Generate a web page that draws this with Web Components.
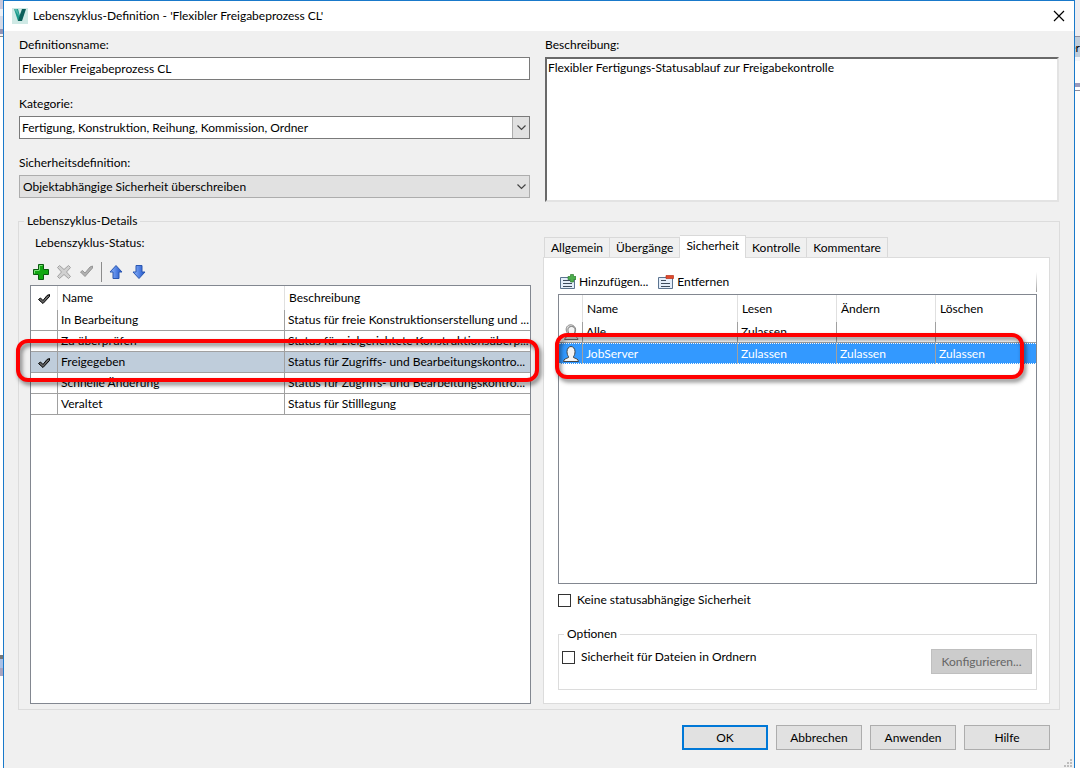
<!DOCTYPE html>
<html lang="de">
<head>
<meta charset="utf-8">
<title>Lebenszyklus-Definition</title>
<style>
    html, body{
        height: 100%;
        margin: 0;
    }

    body{
        background: #fff;
        color: #000;
        font-family: Lato, "Open Sans", sans-serif;
        font-size: 12px;
        line-height: 16px;
        overflow: hidden;
    }
</style>
</head>
<body>

<life-cycle-dialog></life-cycle-dialog>

<script>
const ICONS = {
    vault: `<svg width="16" height="16" viewBox="0 0 16 16"><path fill="#cfe9e5" d="M0 0h16v16H0z"/><path fill="#1b9a8c" d="M2 1h4l2 7 1 5H6z"/><path fill="#0a5f5a" d="M6 13l1.500-5L10 1h4l-4 12z"/><path fill="#4fb5a8" d="M2 1h3l2.500 8z"/></svg>`,
    close: `<svg width="12" height="12" viewBox="0 0 12 12"><path d="M1 1l10 10M11 1L1 11" stroke="#000" stroke-width="1.2"/></svg>`,
    plus: `<svg width="18" height="18" viewBox="0 0 18 18"><path fill="#12a812" stroke="#0a5c10" d="M6.500 1.500h5v5h5v5h-5v5h-5v-5h-5v-5h5z"/><path fill="none" stroke="#7de07a" d="M7.500 7V2.500h3M2.500 10.500v-3h5"/></svg>`,
    cross: `<svg width="18" height="18" viewBox="0 0 18 18"><path fill="#d0d0d0" stroke="#a2a2a2" d="M2.500 4.500l2-2 4.500 4 4.500-4 2 2L11.500 9l4 4.500-2 2-4.500-4-4.500 4-2-2 4-4.500z"/></svg>`,
    tickGrey: `<svg width="18" height="18" viewBox="0 0 18 18"><path fill="#b0b0b0" stroke="#969696" d="M2.500 9l2-1.500L7 10l5-6 2.500-1v2L7 13.500z"/></svg>`,
    tick: `<svg width="14" height="14" viewBox="0 0 14 14"><path fill="#666" stroke="#000" d="M1.500 7.500l2-1.500L6 8.500l4-5 2.500-1v2L6 11.500z"/></svg>`,
    up: `<svg width="18" height="18" viewBox="0 0 18 18"><defs><linearGradient id="g"><stop stop-color="#8fb8ff"/><stop offset="1" stop-color="#1c51c8"/></linearGradient></defs><path fill="url(#g)" stroke="#2a57b0" d="M9 2.500l6 6.500h-3v6.500H6V9H3z"/></svg>`,
    down: `<svg width="18" height="18" viewBox="0 0 18 18"><defs><linearGradient id="g"><stop stop-color="#8fb8ff"/><stop offset="1" stop-color="#1c51c8"/></linearGradient></defs><path fill="url(#g)" stroke="#2a57b0" d="M9 15.500L3 9h3V2.500h6V9h3z"/></svg>`,
    addEntry: `<svg width="16" height="16" viewBox="0 0 16 16"><path fill="#e3edfa" stroke="#5c7490" d="M.5 3.500h14v11H.5z"/><path stroke="#3c4a5c" d="M3 6.500h7M3 9.500h9M3 12.500h9"/><path fill="#4cae4c" stroke="#2e7d32" stroke-width=".7" d="M10.500.5h3v2H16v3h-2.500V8h-3V5.500H8v-3h2.500z"/></svg>`,
    removeEntry: `<svg width="16" height="16" viewBox="0 0 16 16"><path fill="#e3edfa" stroke="#5c7490" d="M.5 3.500h14v11H.5z"/><path stroke="#3c4a5c" d="M3 6.500h5M3 9.500h9M3 12.500h9"/><path fill="#e04a2c" stroke="#b8301a" stroke-width=".7" d="M8 1.500h7.500v3H8z"/></svg>`,
    user: `<svg width="16" height="16" viewBox="0 0 16 16"><path fill="#f4f4f4" stroke="#444" d="M.5 15.500c0-2.500 3-3 5-4v-1C4.500 9.500 4 7.500 4 5.500c0-3 2-5 4-5s4 2 4 5c0 2-.5 4-1.500 5v1c2 1 5 1.500 5 4z"/></svg>`,
    group: `<svg width="16" height="16" viewBox="0 0 16 16"><path fill="#ddd" stroke="#888" d="M3 12c2-1 2-2 1-3.500C3 7 3 5 3.500 3.500 4.500 1 8 0 10 1.500c2 1 3 3 2.500 6L11 11z"/><path fill="#f4f4f4" stroke="#777" d="M1.500 15.500c0-2 3-3 5-4V10C5 9 5 7 5 5.500 5 3.500 6.500 2.500 8.500 2.500S12 3.500 12 5.500 12 9 10.500 10v1.500c2 1 4.500 2 4.500 4z"/></svg>`,
    chevron: `<svg width="9" height="6" viewBox="0 0 9 6"><path fill="none" stroke="#444" stroke-width="1.200" d="M.5.5l4 4 4-4"/></svg>`
};

function attach(host, html){
    const template = document.createElement("template");
    template.innerHTML = html;
    host.attachShadow({mode: "open"});
    host.shadowRoot.appendChild(template.content.cloneNode(true));
}

class SvgIcon extends HTMLElement {
    connectedCallback(){
        if(this.shadowRoot) return;
        attach(this, `
<style>
:host{ display: inline-flex; flex: none; }
svg{ display: block; }
</style>
${ICONS[this.getAttribute("name")]}`);
    }
}
customElements.define("svg-icon", SvgIcon);

//label above an input, a select or a textarea
class FormField extends HTMLElement {
    connectedCallback(){
        if(this.shadowRoot) return;
        const kind = this.getAttribute("kind");
        const value = this.getAttribute("value");
        let control = `<input id="control" value="${value}">`;

        if(kind === "area") {
            control = `<textarea id="control">${value}</textarea>`;
        } else if(kind !== "text") {
            control = `<select id="control"><option>${value}</option></select>
                <span class="arrow"><svg-icon name="chevron"></svg-icon></span>`;
        }

        attach(this, `
<style>
:host{
    display: flex;
    flex-direction: column;
    gap: 4px;
}

.box{
    position: relative;
    display: flex;
    flex: 1;
}

input, select, textarea{
    box-sizing: border-box;
    width: 100%;
    height: 23px;
    margin: 0;
    padding: 0 2px;
    border: 1px solid #7a7a7a;
    border-radius: 0;
    background: #fff;
    color: inherit;
    font: inherit;
    appearance: none;
    outline: none;
}

textarea{
    height: auto;
    padding: 1px;
    resize: none;
    border: 2px solid;
    border-color: #696969 #e3e3e3 #e3e3e3 #696969;
}

:host([kind="select"]) select{
    padding: 0 3px;
    border-color: #adadad;
    background: #e1e1e1;
}

.arrow{
    position: absolute;
    top: 1px;
    right: 1px;
    bottom: 1px;
    width: 16px;
    display: flex;
    align-items: center;
    justify-content: center;
    pointer-events: none;
}

:host([kind="combo"]) .arrow{
    background: #e1e1e1;
    border-left: 1px solid #adadad;
}
</style>
<label for="control">${this.getAttribute("label")}</label>
<div class="box">${control}</div>`);
    }
}
customElements.define("form-field", FormField);

class GroupBox extends HTMLElement {
    connectedCallback(){
        if(this.shadowRoot) return;
        attach(this, `
<style>
:host{ display: grid; }

fieldset{
    display: grid;
    min-width: 0;
    margin: 0;
    padding: var(--group-padding, 0);
    border: 1px solid #dcdcdc;
}

legend{
    margin-left: var(--legend-indent, 5px);
    padding: 0 3px;
}
</style>
<fieldset>
    <legend>${this.getAttribute("label")}</legend>
    <slot></slot>
</fieldset>`);
    }
}
customElements.define("group-box", GroupBox);

class PushButton extends HTMLElement {
    connectedCallback(){
        if(this.shadowRoot) return;
        attach(this, `
<style>
:host{ display: inline-flex; }

button{
    box-sizing: border-box;
    width: var(--button-width, 86px);
    height: 25px;
    padding: 0;
    border: 1px solid #adadad;
    background: #e1e1e1;
    color: inherit;
    font: inherit;
}

button:hover{ background: #e5f1fb; }
:host([primary]) button{ border: 2px solid #0078d7; }

button:disabled{
    border-color: #bfbfbf;
    background: #ccc;
    color: #666;
}
</style>
<button type="button" ${this.hasAttribute("disabled") ? "disabled" : ""}><slot></slot></button>`);
    }
}
customElements.define("push-button", PushButton);

//flat button of the small toolbars
class ToolButton extends HTMLElement {
    connectedCallback(){
        if(this.shadowRoot) return;
        const title = this.getAttribute("label");
        attach(this, `
<style>
:host{ display: inline-flex; }

button{
    display: flex;
    align-items: center;
    gap: 3px;
    padding: 0;
    border: 0;
    background: transparent;
    color: inherit;
    font: inherit;
}
</style>
<button type="button" ${title ? `aria-label="${title}"` : ""}><svg-icon name="${this.getAttribute("icon")}"></svg-icon><slot></slot></button>`);
    }
}
customElements.define("tool-button", ToolButton);

class CheckOption extends HTMLElement {
    connectedCallback(){
        if(this.shadowRoot) return;
        attach(this, `
<style>
:host{ display: flex; }

label{
    display: flex;
    align-items: center;
    gap: 6px;
}

input{
    box-sizing: border-box;
    width: 13px;
    height: 13px;
    margin: 0;
    border: 1px solid #333;
    background: #fff;
    appearance: none;
}

input:checked{ background: #333; }
</style>
<label><input type="checkbox"><slot></slot></label>`);
    }
}
customElements.define("check-option", CheckOption);

//rounded marker over a row, placed by its user
class MarkerFrame extends HTMLElement {
    connectedCallback(){
        if(this.shadowRoot) return;
        attach(this, `
<style>
:host{
    position: absolute;
    box-sizing: border-box;
    border: 4px solid #f00;
    border-radius: 12px;
    filter: drop-shadow(2px 3px 2px rgba(0, 0, 0, 0.5));
    pointer-events: none;
}
</style>`);
    }
}
customElements.define("marker-frame", MarkerFrame);

class DataList extends HTMLElement {
    set data(data){
        const cell = text => ICONS[text] ? `<svg-icon name="${text}"></svg-icon>` : text;
        const cols = data.widths.map(w => `<col style="width: ${w}">`).join("");
        const head = data.head.map(h => `<th>${cell(h)}</th>`).join("");
        const rows = data.rows.map((row, i) =>
            `<tr class="${i === data.selected ? "selected" : ""}">${row.map(c => `<td>${cell(c)}</td>`).join("")}</tr>`
        ).join("");

        attach(this, `
<style>
:host{
    position: relative;
    display: block;
    border: 1px solid #828790;
    background: #fff;
}

table{
    width: 100%;
    table-layout: fixed;
    border-collapse: separate;
    border-spacing: 0;
}

th, td{
    box-sizing: border-box;
    height: 21px;
    padding: 0 0 0 3px;
    border-right: 1px solid #a0a0a0;
    border-bottom: 1px solid #a0a0a0;
    font-weight: normal;
    text-align: left;
    white-space: nowrap;
    overflow: hidden;
}

th{
    height: var(--head-height, 24px);
    padding-left: 4px;
    border-right-color: #e0e0e0;
    border-bottom: 0;
}

th:last-child, td:last-child{ border-right: 0; }

th:first-child, td:first-child{
    padding: 0;
    text-align: center;
}

svg-icon{ vertical-align: middle; }

.selected td{ background: #bfcddb; }

:host([focused]) .selected td{
    border-top: 1px dotted #fff;
    border-bottom: 1px dotted #fff;
    background: #3399ff;
    color: #fff;
}
</style>
<table>
    <colgroup>${cols}</colgroup>
    <thead><tr>${head}</tr></thead>
    <tbody>${rows}</tbody>
</table>
<slot></slot>`);
    }
}
customElements.define("data-list", DataList);

class TabPanel extends HTMLElement {
    connectedCallback(){
        if(this.shadowRoot) return;
        const active = this.getAttribute("active");
        const tabs = this.getAttribute("tabs").split(",").map(name =>
            `<button type="button" role="tab" aria-selected="${name === active}">${name}</button>`
        ).join("");

        attach(this, `
<style>
:host{
    display: flex;
    flex-direction: column;
}

.tabs{
    display: flex;
    align-items: flex-end;
    height: 22px;
    padding-left: 1px;
}

button{
    box-sizing: border-box;
    height: 20px;
    padding: 0 6px;
    border: 1px solid #d9d9d9;
    border-width: 1px 1px 0 0;
    background: #f0f0f0;
    color: inherit;
    font: inherit;
    line-height: 18px;
    white-space: nowrap;
}

button:first-child{ border-left-width: 1px; }

button[aria-selected="true"]{
    height: 23px;
    padding: 0 6px 3px;
    background: #fff;
    margin-bottom: -1px;
    z-index: 1;
}

.page{
    flex: 1;
    display: flex;
    flex-direction: column;
    padding: 11px 12px 13px 14px;
    border: 1px solid #dcdcdc;
    background: #fff;
}
</style>
<div class="tabs" role="tablist">${tabs}</div>
<div class="page" role="tabpanel"><slot></slot></div>`);
    }
}
customElements.define("tab-panel", TabPanel);

class LifeCycleDialog extends HTMLElement {
    constructor(){
        super();
        attach(this, `
<style>
:host{
    display: grid;
    grid-template-columns: 3px minmax(0, 1fr) 5px;
    height: 100vh;
}

/* parts of the window behind the dialog */
.behind{
    overflow: hidden;
    background: linear-gradient(#c9c7da 0 9px, #eef0f5 9px 16px, #d4d9e6 16px 29px, #9494b4 29px 34px, #f4f4f4 34px 36px, #888 36px 37px, #fff 37px 655px, #777 655px 659px, #a9c0e6 659px 668px, #a8a4c0 668px 676px, #fff 676px);
}

.behind.right{
    display: flex;
    justify-content: flex-end;
    padding-top: 40px;
    background: linear-gradient(#ededf1 0 36px, #8c8c9c 36px 37px, #bfcddb 37px 57px, #f4f6fa 57px 61px, #fff 61px 83px, #9a9abc 83px 87px, #fff 87px 90px, #8c8c9c 90px 91px, #fff 91px);
}

.dialog{
    position: relative;
    display: flex;
    flex-direction: column;
    border: 1px solid #1979ca;
    border-bottom: 0;
    background: #f0f0f0;
}

header{
    display: flex;
    align-items: center;
    gap: 5px;
    height: 30px;
    padding: 0 9px 0 8px;
    background: #fff;
}

h1{
    flex: 1;
    margin: 0;
    font-size: 12px;
    font-weight: normal;
}

main{
    flex: 1;
    display: flex;
    flex-direction: column;
    padding: 6px 14px 0;
}

.general{
    display: grid;
    grid-template-columns: minmax(0, 511fr) minmax(0, 514fr);
    gap: 15px;
    padding: 0 1px;
}

.fields{
    display: flex;
    flex-direction: column;
    gap: 16px;
    padding-bottom: 4px;
}

.details{
    flex: 1;
    margin-top: 11px;
    --group-padding: 6px 9px 5px 11px;
    --legend-indent: -6px;
}

.columns{
    display: grid;
    grid-template-columns: minmax(0, 501fr) minmax(0, 507fr);
    gap: 12px;
}

.states{
    display: flex;
    flex-direction: column;
}

.states h2{
    margin: 0;
    padding-left: 5px;
    font-size: 12px;
    font-weight: normal;
}

.tools{
    display: flex;
    align-items: center;
    gap: 5px;
    height: 26px;
    padding: 8px 0 0 2px;
}

.line{
    width: 1px;
    height: 20px;
    background: #8c8c8c;
}

data-list{ flex: 1; }
.states marker-frame{ top: 53px; right: -9px; left: -15px; height: 43px; }

.security{
    display: flex;
    align-items: center;
    gap: 10px;
    height: 25px;
    padding-left: 2px;
}

.security .line{
    margin-left: auto;
    background: linear-gradient(#fff, #a0a0a0);
}

.rights{ --head-height: 27px; }
.rights marker-frame{ top: 38px; right: 12px; left: -4px; height: 46px; }

.no-state{ margin: 8px 0 18px; }

.options{
    --group-padding: 7px 4px 15px 3px;
    --legend-indent: 2px;
}

.row{
    display: flex;
    align-items: flex-start;
    justify-content: space-between;
    --button-width: 101px;
}

footer{
    display: flex;
    justify-content: flex-end;
    gap: 8px;
    padding: 15px 24px 18px;
}

.grip{
    position: absolute;
    right: 1px;
    bottom: 0;
}
</style>
<div class="behind"></div>
<div class="dialog" role="dialog" aria-labelledby="title">
    <header>
        <svg-icon name="vault"></svg-icon>
        <h1 id="title">Lebenszyklus-Definition - 'Flexibler Freigabeprozess CL'</h1>
        <tool-button icon="close" label="Schließen"></tool-button>
    </header>
    <main>
        <div class="general">
            <div class="fields">
                <form-field kind="text" label="Definitionsname:" value="Flexibler Freigabeprozess CL"></form-field>
                <form-field kind="combo" label="Kategorie:" value="Fertigung, Konstruktion, Reihung, Kommission, Ordner"></form-field>
                <form-field kind="select" label="Sicherheitsdefinition:" value="Objektabhängige Sicherheit überschreiben"></form-field>
            </div>
            <form-field kind="area" label="Beschreibung:" value="Flexibler Fertigungs-Statusablauf zur Freigabekontrolle"></form-field>
        </div>
        <group-box class="details" label="Lebenszyklus-Details">
            <div class="columns">
                <section class="states">
                    <h2>Lebenszyklus-Status:</h2>
                    <div class="tools">
                        <tool-button icon="plus" label="Neu"></tool-button>
                        <tool-button icon="cross" label="Löschen"></tool-button>
                        <tool-button icon="tickGrey" label="Standard"></tool-button>
                        <span class="line"></span>
                        <tool-button icon="up" label="Nach oben"></tool-button>
                        <tool-button icon="down" label="Nach unten"></tool-button>
                    </div>
                    <data-list id="states"><marker-frame></marker-frame></data-list>
                </section>
                <tab-panel tabs="Allgemein,Übergänge,Sicherheit,Kontrolle,Kommentare" active="Sicherheit">
                    <div class="security">
                        <tool-button icon="addEntry">Hinzufügen...</tool-button>
                        <tool-button icon="removeEntry">Entfernen</tool-button>
                        <span class="line"></span>
                    </div>
                    <data-list id="rights" class="rights" focused><marker-frame></marker-frame></data-list>
                    <check-option class="no-state">Keine statusabhängige Sicherheit</check-option>
                    <group-box class="options" label="Optionen">
                        <div class="row">
                            <check-option>Sicherheit für Dateien in Ordnern</check-option>
                            <push-button disabled>Konfigurieren...</push-button>
                        </div>
                    </group-box>
                </tab-panel>
            </div>
        </group-box>
    </main>
    <footer>
        <push-button primary>OK</push-button>
        <push-button>Abbrechen</push-button>
        <push-button>Anwenden</push-button>
        <push-button>Hilfe</push-button>
    </footer>
    <svg class="grip" width="10" height="10"><path fill="#bdbdbd" d="M7 1h2v2H7zM4 4h2v2H4zM7 4h2v2H7zM1 7h2v2H1zM4 7h2v2H4zM7 7h2v2H7z"/></svg>
</div>
<div class="behind right">er</div>`);
    }

    connectedCallback(){
        this.shadowRoot.querySelector("#states").data = {
            widths: ["27px", "227px", "auto"],
            head: ["tick", "Name", "Beschreibung"],
            selected: 2,
            rows: [
                ["", "In Bearbeitung", "Status für freie Konstruktionserstellung und ..."],
                ["", "Zu überprüfen", "Status für zielgerichtete Konstruktionsüberp..."],
                ["tick", "Freigegeben", "Status für Zugriffs- und Bearbeitungskontro..."],
                ["", "Schnelle Änderung", "Status für Zugriffs- und Bearbeitungskontro..."],
                ["", "Veraltet", "Status für Stilllegung"]
            ]
        };
        this.shadowRoot.querySelector("#rights").data = {
            widths: ["24px", "155px", "99px", "99px", "auto"],
            head: ["", "Name", "Lesen", "Ändern", "Löschen"],
            selected: 1,
            rows: [
                ["group", "Alle", "Zulassen", "", ""],
                ["user", "JobServer", "Zulassen", "Zulassen", "Zulassen"]
            ]
        };
    }
}
customElements.define("life-cycle-dialog", LifeCycleDialog);
</script>
</body>
</html>
